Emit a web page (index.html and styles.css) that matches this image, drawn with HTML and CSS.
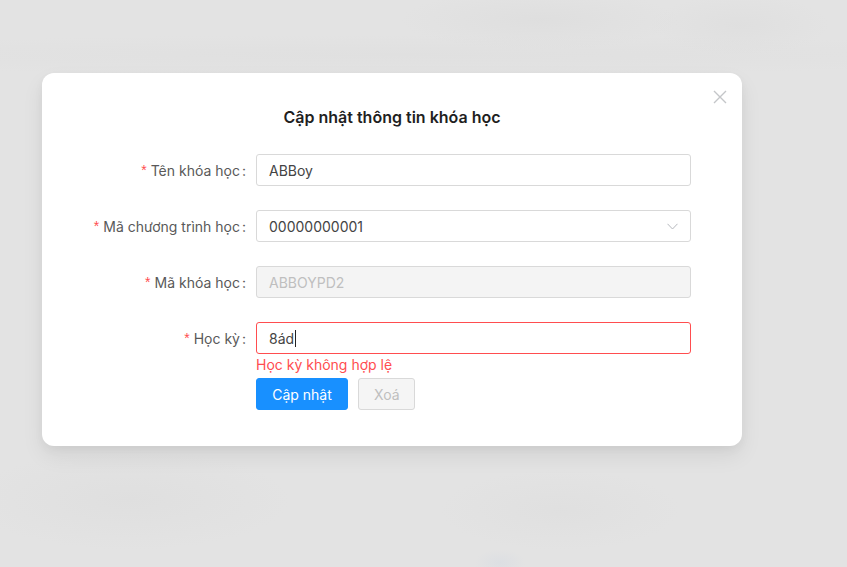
FILE: index.html
```html
<!DOCTYPE html>
<html lang="vi">
<head>
<meta charset="utf-8">
<title>Cập nhật thông tin khóa học</title>
<link rel="stylesheet" href="styles.css">
</head>
<body>
<div class="backdrop">
  <div class="modal">
    <button class="close" aria-label="Đóng">
      <svg width="14" height="14" viewBox="0 0 14 14"><path d="M1 1L13 13M13 1L1 13" stroke="#c4c6c9" stroke-width="1.4" fill="none"/></svg>
    </button>
    <h2 class="title">Cập nhật thông tin khóa học</h2>
    <form class="form">
      <div class="row">
        <label class="label"><span class="req">*</span>Tên khóa học<span class="colon">:</span></label>
        <div class="control"><div class="input">ABBoy</div></div>
      </div>
      <div class="row">
        <label class="label"><span class="req">*</span>Mã chương trình học<span class="colon">:</span></label>
        <div class="control"><div class="input select">00000000001
          <svg class="chev" width="11" height="7" viewBox="0 0 11 7"><path d="M0.5 0.8L5.5 6L10.5 0.8" stroke="#b5b8bd" stroke-width="1" fill="none"/></svg></div></div>
      </div>
      <div class="row">
        <label class="label"><span class="req">*</span>Mã khóa học<span class="colon">:</span></label>
        <div class="control"><div class="input disabled">ABBOYPD2</div></div>
      </div>
      <div class="row error-row">
        <label class="label"><span class="req">*</span>Học kỳ<span class="colon">:</span></label>
        <div class="control">
          <div class="input error">8ád<span class="caret"></span></div>
          <div class="explain">Học kỳ không hợp lệ</div>
        </div>
      </div>
      <div class="actions">
        <button type="button" class="btn primary">Cập nhật</button>
        <button type="button" class="btn disabled-btn">Xoá</button>
      </div>
    </form>
  </div>
</div>
</body>
</html>
```

FILE: styles.css
```css
* { box-sizing: border-box; }
html, body { margin: 0; padding: 0; }
body {
  width: 847px;
  height: 567px;
  overflow: hidden;
  font-family: Inter, "Noto Sans", sans-serif;
  background:
    radial-gradient(ellipse 140px 30px at 540px 20px, rgba(212,212,212,0.3), transparent),
    radial-gradient(ellipse 90px 30px at 740px 25px, rgba(212,212,212,0.25), transparent),
    radial-gradient(ellipse 700px 20px at 400px 55px, rgba(212,212,212,0.2), transparent),
    radial-gradient(ellipse 160px 50px at 130px 500px, rgba(214,214,214,0.3), transparent),
    radial-gradient(ellipse 120px 40px at 560px 510px, rgba(216,216,216,0.3), transparent),
    radial-gradient(ellipse 25px 14px at 500px 563px, rgba(210,216,226,0.4), transparent),
    #e3e3e3;
}
.backdrop {
  padding: 73px 0 0 42px;
}
.modal {
  position: relative;
  width: 700px;
  height: 373px;
  background: #fff;
  border-radius: 12px;
  box-shadow: 0 10px 22px rgba(0,0,0,0.07), 0 4px 10px rgba(0,0,0,0.04);
  padding: 34px 0 0 0;
}
.close {
  position: absolute;
  top: 17px;
  right: 15px;
  width: 14px;
  height: 14px;
  padding: 0;
  border: 0;
  background: none;
  display: flex;
}
.title {
  margin: 0;
  text-align: center;
  font-size: 16px;
  font-weight: 600;
  line-height: 20px;
  color: #1f1f1f;
}
.form {
  margin-top: 27px;
  display: flex;
  flex-direction: column;
}
.row {
  display: flex;
  align-items: flex-start;
  margin-bottom: 24px;
}
.row.error-row { margin-bottom: 2px; }
.label {
  width: 206px;
  height: 32px;
  display: flex;
  align-items: center;
  justify-content: flex-end;
  font-size: 14px;
  color: #595959;
}
.req {
  color: #ff4d4f;
  font-size: 14px;
  margin-right: 4px;
  font-family: SimSun, "Liberation Sans", sans-serif;
}
.colon {
  margin: 0 2px 0 2px;
}
.control {
  margin-left: 8px;
  width: 435px;
}
.input {
  position: relative;
  height: 32px;
  border: 1px solid #d9d9d9;
  border-radius: 3px;
  padding: 0 12px;
  display: flex;
  align-items: center;
  font-size: 14px;
  color: #444;
  background: #fff;
}
.input.disabled {
  background: #f4f4f4;
  color: #bfbfbf;
  border-color: #d9d9d9;
}
.input.error {
  border-color: #ff4d4f;
}
.caret {
  display: inline-block;
  width: 1px;
  height: 17px;
  background: #222;
  margin-left: 1px;
}
.chev {
  position: absolute;
  right: 12px;
  top: 12px;
}
.explain {
  font-size: 14px;
  line-height: 22px;
  color: #ff4d4f;
}
.actions {
  display: flex;
  gap: 10px;
  padding-left: 214px;
}
.btn {
  height: 32px;
  font-family: Inter, "Noto Sans", sans-serif;
  font-size: 14px;
  border-radius: 3px;
  padding: 0 15px;
  cursor: pointer;
}
.btn.primary {
  width: 92px;
  background: #1890ff;
  border: 1px solid #1890ff;
  color: #fff;
}
.btn.disabled-btn {
  width: 57px;
  background: #f5f5f5;
  border: 1px solid #d9d9d9;
  color: #bfbfbf;
}
```
